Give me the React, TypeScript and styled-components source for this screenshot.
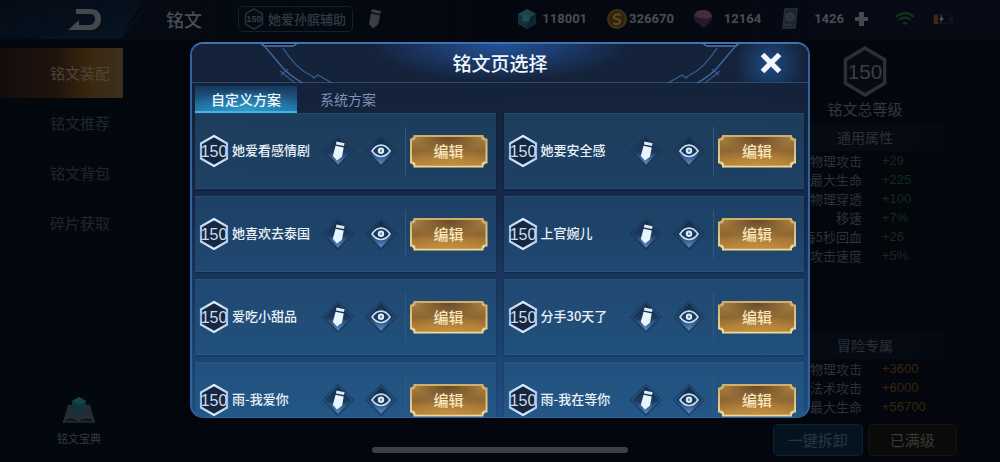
import React from "react";
import styled, { createGlobalStyle } from "styled-components";

const GlobalStyle = createGlobalStyle`
  *, *::before, *::after { box-sizing: border-box; }
  body {
    margin: 0;
    background: #03070d;
    font-family: "Noto Sans CJK SC", sans-serif;
  }
  button { font: inherit; color: inherit; background: none; border: 0; padding: 0; cursor: pointer; }
  svg { display: block; flex: none; }
`;

const Screen = styled.div`
  position: relative;
  min-height: 100vh;
  display: flex;
  flex-direction: column;
  overflow: hidden;
  background: #03070d;
`;

/* ---------- top bar ---------- */

const TopBar = styled.header`
  display: flex;
  align-items: center;
  height: 40px;
  padding: 0 47px 2px 0;
  background: linear-gradient(90deg, #050b15, #04070f 50%, #070b16);
  color: #45484d;
`;

const BackArea = styled.button`
  display: flex;
  align-items: center;
  width: 144px;
  height: 40px;
`;

const ScreenTitle = styled.h1`
  margin: 0 0 0 22px;
  width: 72px;
  font-size: 18px;
  line-height: 24px;
  font-weight: 500;
  color: #4a4d53;
`;

const PagePill = styled.button`
  && {
    display: flex;
    align-items: center;
    gap: 3px;
    height: 26px;
    padding: 0 6px 0 4px;
    margin-right: 14px;
    border: 1px solid #11222c;
    border-radius: 5px;
    font-size: 13px;
    line-height: 20px;
    font-weight: 500;
    white-space: nowrap;
    color: #343a42;
  }
`;

const IconButton = styled.button`
  display: flex;
`;

const Resources = styled.ul`
  display: flex;
  align-items: center;
  margin: 0 0 0 auto;
  padding: 0;
  list-style: none;
`;

const Resource = styled.li<{ $gap: number; $after: number }>`
  display: flex;
  align-items: center;
  gap: ${(p) => p.$gap}px;
  margin-right: ${(p) => p.$after}px;
  font: 700 13px/20px Roboto, sans-serif;
  color: #494d52;
`;

const StatusIcons = styled.div`
  display: flex;
  align-items: center;
  gap: 18px;
  margin-left: 26px;
`;

/* ---------- page body ---------- */

const Body = styled.div`
  flex: 1;
  display: flex;
  justify-content: space-between;
`;

const SideBar = styled.nav`
  display: flex;
  flex-direction: column;
  width: 123px;
  padding: 8px 0 14px;
  background: #03080f;
`;

const SideItem = styled.button<{ $active?: boolean }>`
  && {
    height: 50px;
    padding: 0 13px 2px 0;
    text-align: right;
    font-size: 15px;
    color: ${(p) => (p.$active ? "#4c4539" : "#20262d")};
    background: ${(p) =>
      p.$active ? "linear-gradient(90deg, #130c0d, #20130d 45%, #3c2810 75%, #39301c)" : "none"};
  }
`;

const BookLink = styled.button`
  && {
    display: flex;
    flex-direction: column;
    align-items: center;
    gap: 2px;
    width: 60px;
    margin: auto 14px 0 auto;
    font-size: 11px;
    line-height: 20px;
    color: #33383f;
  }
`;

const StatsPanel = styled.aside`
  display: flex;
  flex-direction: column;
  align-items: stretch;
  width: 184px;
  margin-right: 43px;
  padding: 6px 0;
`;

const TotalLevel = styled.div`
  display: flex;
  flex-direction: column;
  align-items: center;
  font-size: 15px;
  line-height: 24px;
  color: #34383e;
  margin-bottom: 2px;
`;

const SectionTitle = styled.h2`
  margin: 0;
  text-align: center;
  font-size: 14px;
  line-height: 28px;
  font-weight: 400;
  color: #2c3139;
  background: linear-gradient(90deg, transparent, #060a13 30%, #060a13 70%, transparent);
`;

const StatTable = styled.table<{ $tone: string }>`
  border-collapse: collapse;
  width: 100%;
  font-size: 13px;
  line-height: 19px;
  th {
    width: 89px;
    padding: 0;
    font-weight: 400;
    text-align: right;
    white-space: nowrap;
    color: #2c3137;
  }
  td {
    padding: 0 0 0 20px;
    font-family: "Liberation Sans", sans-serif;
    color: ${(p) => p.$tone};
  }
`;

const Spacer = styled.div`
  flex: 1;
`;

const PanelActions = styled.div`
  display: flex;
  gap: 5px;
  margin-top: 8px;
`;

const PanelButton = styled.button<{ $blue?: boolean }>`
  && {
    flex: 1;
    height: 32px;
    padding-bottom: 2px;
    border: 1px solid ${(p) => (p.$blue ? "#0b2436" : "#17130f")};
    border-radius: 5px;
    background: ${(p) => (p.$blue ? "#05131f" : "#0b0a0b")};
    font-size: 15px;
    color: ${(p) => (p.$blue ? "#273643" : "#3c3832")};
  }
`;

/* ---------- dialog ---------- */

const Overlay = styled.div`
  position: absolute;
  inset: 0;
  display: flex;
  flex-direction: column;
  align-items: center;
  padding-top: 42px;
`;

const Dialog = styled.section`
  flex: 1 1 0;
  min-height: 0;
  width: 62%;
  display: flex;
  flex-direction: column;
  overflow: hidden;
  border: 2px solid #2f639f;
  border-top-color: #3f74b4;
  border-bottom-width: 1px;
  border-radius: 13px;
  background: linear-gradient(180deg, #14213a 0%, #14243b 20%, #15294a 42%, #1a3f69 75%, #1f4f82 100%);
`;

const DialogHeader = styled.header`
  position: relative;
  flex: none;
  display: grid;
  grid-template-columns: 1fr auto 1fr;
  align-items: center;
  height: 39px;
  border-bottom: 1px solid #2c4a70;
  background: radial-gradient(ellipse 130px 38px at 50% 0, #23539a, transparent),
    radial-gradient(circle 36px at calc(100% - 38px) 20px, #1d4c84, transparent), #14223a;
`;

const DialogTitle = styled.h2`
  grid-column: 2;
  margin: 0;
  font-size: 19px;
  line-height: 28px;
  font-weight: 500;
  color: #f2f7fd;
`;

const CloseButton = styled.button`
  justify-self: end;
  margin-right: 26px;
  display: flex;
`;

const Ornament = styled.svg<{ $right?: boolean }>`
  position: absolute;
  top: -2px;
  ${(p) => (p.$right ? "right: 64px; transform: scaleX(-1);" : "left: 64px;")}
`;

const Tabs = styled.div`
  flex: none;
  display: flex;
  padding: 3px 3px 0;
`;

const Tab = styled.button<{ $active?: boolean }>`
  && {
    width: 102px;
    height: 27px;
    font-size: 14px;
    line-height: 24px;
    font-weight: ${(p) => (p.$active ? 500 : 400)};
    color: ${(p) => (p.$active ? "#f3f9fd" : "#7d91b8")};
    border-bottom: 2px solid ${(p) => (p.$active ? "#45b4dc" : "transparent")};
    background: ${(p) =>
      p.$active
        ? "radial-gradient(ellipse 60px 22px at 50% 100%, #2f9acb, transparent), linear-gradient(180deg, #17375a, #2175ab)"
        : "none"};
  }
`;

const Plans = styled.ul`
  flex: 1;
  min-height: 0;
  overflow: hidden;
  display: grid;
  grid-template-columns: 1fr 1fr;
  grid-auto-rows: 76px;
  gap: 7px 8px;
  margin: 0;
  padding: 0 4px 0 3px;
  list-style: none;
`;

const PlanCard = styled.li`
  display: flex;
  align-items: center;
  padding: 0 8px 0 4px;
  border: 1px solid rgba(64, 124, 170, 0.2);
  border-width: 1px 0;
  background: rgba(44, 98, 140, 0.42);
  box-shadow: 0 1px 2px rgba(4, 14, 34, 0.35);
`;

const PlanName = styled.span`
  flex: 1;
  padding: 0 0 2px 3px;
  font-size: 13px;
  line-height: 20px;
  font-weight: 500;
  white-space: nowrap;
  color: #e9f1f8;
`;

const CardIcons = styled.div`
  display: flex;
  gap: 11px;
`;

const Divider = styled.span`
  width: 1px;
  height: 48px;
  margin: 0 4px 0 8px;
  background: #35587a;
`;

const notched =
  "polygon(4px 0, calc(100% - 4px) 0, calc(100% - 4px) 2px, calc(100% - 2px) 4px, 100% 4px, 100% calc(100% - 4px), calc(100% - 2px) calc(100% - 4px), calc(100% - 4px) calc(100% - 2px), calc(100% - 4px) 100%, 4px 100%, 4px calc(100% - 2px), 2px calc(100% - 4px), 0 calc(100% - 4px), 0 4px, 2px 4px, 4px 2px)";

const EditButton = styled.button`
  && {
    position: relative;
    isolation: isolate;
    width: 78px;
    height: 33px;
    padding-bottom: 2px;
    font-size: 15px;
    font-weight: 500;
    color: #f8e6bd;
    background: linear-gradient(180deg, #cfae6a, #d6c487 50%, #f0dc9a);
    clip-path: ${notched};
  }
  &::before {
    content: "";
    position: absolute;
    z-index: -1;
    inset: 2px;
    background: radial-gradient(ellipse 34px 15px at 50% 0, #684828, transparent),
      radial-gradient(ellipse 60px 18px at 50% 100%, #c48f40, transparent),
      linear-gradient(180deg, #a8803f, #8c6532 50%, #b07e34);
    clip-path: ${notched};
  }
`;

const HomeArea = styled.div`
  flex: none;
  width: 256px;
  height: 44px;
  padding-top: 29px;
  &::before {
    content: "";
    display: block;
    height: 6px;
    border-radius: 3px;
    background: #3d4047;
  }
`;

/* ---------- icons ---------- */

function LevelBadge() {
  return (
    <svg width="30" height="34" viewBox="0 0 30 34">
      <defs>
        <linearGradient id="hexEdge" x1="0" y1="0" x2="0" y2="1">
          <stop offset="0" stopColor="#e2efff" />
          <stop offset="0.5" stopColor="#8fb2df" />
          <stop offset="1" stopColor="#dcecff" />
        </linearGradient>
      </defs>
      <path d="M15 2 28 9.500V24.500L15 32 2 24.500V9.500Z" fill="#152741" stroke="url(#hexEdge)" strokeWidth="2.200" />
      <text x="15" y="23" textAnchor="middle" fontFamily="Liberation Sans, sans-serif" fontSize="16" fill="#cfdbe8">
        150
      </text>
    </svg>
  );
}

function DimBadge({ width, height, size, weight }: { width: number; height: number; size: number; weight: number }) {
  return (
    <svg width={width} height={height} viewBox="0 0 44 52">
      <path
        d="M22 2 42 14V38L22 50 2 38V14Z"
        fill="#060a12"
        stroke="#2c2f35"
        strokeWidth="3.500"
      />
      <text
        x="22"
        y={26 + size * 0.36}
        textAnchor="middle"
        fontFamily="Liberation Sans, sans-serif"
        fontSize={size}
        fontWeight={weight}
        fill="#3b3f45"
      >
        150
      </text>
    </svg>
  );
}

function DiamondBase() {
  return (
    <>
      <defs>
        <linearGradient id="diamond" x1="0" y1="0" x2="0" y2="1">
          <stop offset="0" stopColor="#152b47" />
          <stop offset="0.55" stopColor="#1c3a60" />
          <stop offset="1" stopColor="#5b8fcf" />
        </linearGradient>
      </defs>
      <path d="M16 0.500 31.500 16 16 31.500 0.500 16Z" fill="none" stroke="#18304b" strokeWidth="1" />
      <path d="M16 2.500 29 16 16 29.500 3 16Z" fill="url(#diamond)" />
    </>
  );
}

function PencilDiamond() {
  return (
    <svg width="32" height="32" viewBox="0 0 32 32">
      <DiamondBase />
      <path d="M14.500 6.500 22.500 8.200 22 11 13.900 9.400Z" fill="#dcebf7" />
      <path d="M13.600 10.700 21.700 12.400 20 21.800 15 25.500 10.800 21Z" fill="#e8f4fb" />
    </svg>
  );
}

function EyeDiamond() {
  return (
    <svg width="32" height="32" viewBox="0 0 32 32">
      <DiamondBase />
      <path
        d="M7 16Q11 10.200 16 10.200T25 16Q21 21.500 16 21.500T7 16Z"
        fill="#1b3658"
        stroke="#c5e0f2"
        strokeWidth="1.700"
      />
      <circle cx="16" cy="15.800" r="3.200" fill="#d9edf8" />
      <circle cx="16" cy="15.800" r="1.200" fill="#5f86ac" />
    </svg>
  );
}

function HeaderOrnament({ right }: { right?: boolean }) {
  return (
    <Ornament $right={right} width="80" height="44" viewBox="0 0 80 44" fill="none">
      <path d="M5 0H42L38 4H8Z" fill="#050a14" />
      <path d="M3 0 8 4H37L42 1" stroke="#4a7fba" strokeWidth="1.300" />
      <path d="M5 0 27 26Q34 34 47 41" stroke="#3d6aa0" strokeWidth="1.400" />
      <path d="M27 6Q40 27 56 34L58 36 62 33 76 41" stroke="#345f94" strokeWidth="1.300" />
      <path d="M24 29 39 41M25 33 32 27" stroke="#345a8b" strokeWidth="1.400" />
    </Ornament>
  );
}

function BackIcon() {
  return (
    <svg width="144" height="40" viewBox="0 0 144 40">
      <defs>
        <linearGradient id="backGlow" x1="0" y1="0" x2="1" y2="1">
          <stop offset="0" stopColor="#050b15" />
          <stop offset="1" stopColor="#061422" />
        </linearGradient>
      </defs>
      <path d="M0 0H143L121 38H0Z" fill="url(#backGlow)" />
      <path d="M143 12 121 38.500H40" fill="none" stroke="#091c28" />
      <path
        d="M76 10H92Q101 11 101 20T92 31H68L79 21V26H90Q95 25 95 20T90 15H76Z"
        fill="#45474a"
      />
    </svg>
  );
}

function PencilIcon() {
  return (
    <svg width="16" height="22" viewBox="0 0 16 22" fill="#3a3d41">
      <path d="M5 1 14 3 13.300 6 4.200 4Z" />
      <path d="M4 5.300 13 7.200 11.500 16 6 20.500 2 16Z" />
    </svg>
  );
}

function GemIcon() {
  return (
    <svg width="20" height="22" viewBox="0 0 20 22">
      <path d="M10 1 19 6V16L10 21 1 16V6Z" fill="#11323a" />
      <path d="M10 1 19 6 10 11 1 6Z" fill="#1b444b" />
      <path d="M10 11 19 6V16L10 21Z" fill="#0c2632" />
      <path d="M6 6 13 8 12 14 5 13Z" fill="#204c54" />
    </svg>
  );
}

function CoinIcon() {
  return (
    <svg width="20" height="22" viewBox="0 0 20 22">
      <circle cx="10" cy="11" r="9" fill="#2f210d" stroke="#443215" strokeWidth="2" />
      <path d="M14 7.500Q10 5 7.500 7.500T10 11.200 12.500 15 6 15" fill="none" stroke="#5c4520" strokeWidth="2.400" />
    </svg>
  );
}

function MushroomIcon() {
  return (
    <svg width="22" height="22" viewBox="0 0 22 22">
      <path d="M2 9Q3 1 12 2T20 11Q17 15 12 20L7 16Q1 13 2 9Z" fill="#29162f" />
      <path d="M2 8Q4 1 12 2 20 3 20 9 15 12 8 10Z" fill="#3f2e3e" />
    </svg>
  );
}

function CardIcon() {
  return (
    <svg width="18" height="22" viewBox="0 0 18 22">
      <path d="M4 1H16L14 20H2Z" fill="#1c242c" stroke="#272f36" strokeWidth="1.500" />
      <circle cx="9" cy="9" r="4" fill="#28323a" stroke="#363f46" />
      <path d="M4 17H11" stroke="#30393f" strokeWidth="1.500" />
    </svg>
  );
}

function PlusIcon() {
  return (
    <svg width="15" height="16" viewBox="0 0 15 16">
      <path d="M5 1H10V6H14V10H10V15H5V10H1V6H5Z" fill="#45484c" />
    </svg>
  );
}

function WifiIcon() {
  return (
    <svg width="20" height="16" viewBox="0 0 20 16" fill="none" stroke="#0e3415" strokeWidth="2.200">
      <path d="M1 6Q10-2 19 6" />
      <path d="M4 9Q10 4 16 9" />
      <path d="M7 12Q10 9.500 13 12L10 14Z" fill="#0e3415" stroke="none" />
    </svg>
  );
}

function BatteryIcon() {
  return (
    <svg width="20" height="12" viewBox="0 0 20 12">
      <rect x="0.500" y="1.500" width="17" height="9" fill="none" stroke="#10141a" />
      <rect x="1" y="2" width="4" height="9" fill="#402c0d" />
      <path d="M9 1 6 7H8L7 11 11 5H9Z" fill="#4d5053" />
      <path d="M19 4V9" stroke="#1c2026" />
    </svg>
  );
}

function BookIcon() {
  return (
    <svg width="34" height="30" viewBox="0 0 34 30">
      <path d="M6 9Q12 8 17 13 22 8 28 9L33 26H1Z" fill="#252c31" />
      <path d="M1 26 5 22Q12 20 17 25 22 20 29 22L33 26Z" fill="#11191f" stroke="#30383e" />
      <path d="M17 1 24 5V13L17 18 10 13V5Z" fill="#0f343a" />
      <path d="M17 1 24 5 17 9 10 5Z" fill="#17444a" />
    </svg>
  );
}

function CloseIcon() {
  return (
    <svg width="22" height="22" viewBox="0 0 22 22">
      <path d="M2.500 2.500 19.500 19.500M19.500 2.500 2.500 19.500" stroke="#f1f7fc" strokeWidth="5.200" />
    </svg>
  );
}

/* ---------- data ---------- */

const plans = [
  "她爱看感情剧",
  "她要安全感",
  "她喜欢去泰国",
  "上官婉儿",
  "爱吃小甜品",
  "分手30天了",
  "雨-我爱你",
  "雨-我在等你",
];

const commonStats = [
  ["物理攻击", "+29"],
  ["最大生命", "+225"],
  ["物理穿透", "+100"],
  ["移速", "+7%"],
  ["每5秒回血", "+26"],
  ["攻击速度", "+5%"],
];

const adventureStats = [
  ["物理攻击", "+3600"],
  ["法术攻击", "+6000"],
  ["最大生命", "+56700"],
];

function Stats({ rows, tone }: { rows: string[][]; tone: string }) {
  return (
    <StatTable $tone={tone}>
      <tbody>
        {rows.map(([label, value]) => (
          <tr key={label}>
            <th scope="row">{label}</th>
            <td>{value}</td>
          </tr>
        ))}
      </tbody>
    </StatTable>
  );
}

export default function App() {
  return (
    <Screen>
      <GlobalStyle />
      <TopBar>
        <BackArea aria-label="返回">
          <BackIcon />
        </BackArea>
        <ScreenTitle>铭文</ScreenTitle>
        <PagePill>
          <DimBadge width={22} height={22} size={21} weight={700} />
          她爱孙膑辅助
        </PagePill>
        <IconButton aria-label="重命名">
          <PencilIcon />
        </IconButton>
        <Resources>
          <Resource $gap={5} $after={20}><GemIcon />118001</Resource>
          <Resource $gap={2} $after={18}><CoinIcon />326670</Resource>
          <Resource $gap={10} $after={20}><MushroomIcon />12164</Resource>
          <Resource $gap={15} $after={10}><CardIcon />1426</Resource>
        </Resources>
        <IconButton aria-label="增加">
          <PlusIcon />
        </IconButton>
        <StatusIcons>
          <WifiIcon />
          <BatteryIcon />
        </StatusIcons>
      </TopBar>

      <Body>
        <SideBar>
          <SideItem $active>铭文装配</SideItem>
          <SideItem>铭文推荐</SideItem>
          <SideItem>铭文背包</SideItem>
          <SideItem>碎片获取</SideItem>
          <BookLink>
            <BookIcon />
            铭文宝典
          </BookLink>
        </SideBar>
        <StatsPanel>
          <TotalLevel>
            <DimBadge width={46} height={51} size={21} weight={400} />
            铭文总等级
          </TotalLevel>
          <SectionTitle>通用属性</SectionTitle>
          <Stats rows={commonStats} tone="#122c18" />
          <Spacer />
          <SectionTitle>冒险专属</SectionTitle>
          <Stats rows={adventureStats} tone="#382511" />
          <PanelActions>
            <PanelButton $blue>一键拆卸</PanelButton>
            <PanelButton>已满级</PanelButton>
          </PanelActions>
        </StatsPanel>
      </Body>

      <Overlay>
        <Dialog role="dialog" aria-labelledby="dialog-title">
          <DialogHeader>
            <HeaderOrnament />
            <HeaderOrnament right />
            <DialogTitle id="dialog-title">铭文页选择</DialogTitle>
            <CloseButton aria-label="关闭">
              <CloseIcon />
            </CloseButton>
          </DialogHeader>
          <Tabs role="tablist">
            <Tab role="tab" aria-selected="true" $active>自定义方案</Tab>
            <Tab role="tab" aria-selected="false">系统方案</Tab>
          </Tabs>
          <Plans>
            {plans.map((name) => (
              <PlanCard key={name}>
                <LevelBadge />
                <PlanName>{name}</PlanName>
                <CardIcons>
                  <IconButton aria-label="重命名">
                    <PencilDiamond />
                  </IconButton>
                  <IconButton aria-label="预览">
                    <EyeDiamond />
                  </IconButton>
                </CardIcons>
                <Divider />
                <EditButton>编辑</EditButton>
              </PlanCard>
            ))}
          </Plans>
        </Dialog>
        <HomeArea />
      </Overlay>
    </Screen>
  );
}
